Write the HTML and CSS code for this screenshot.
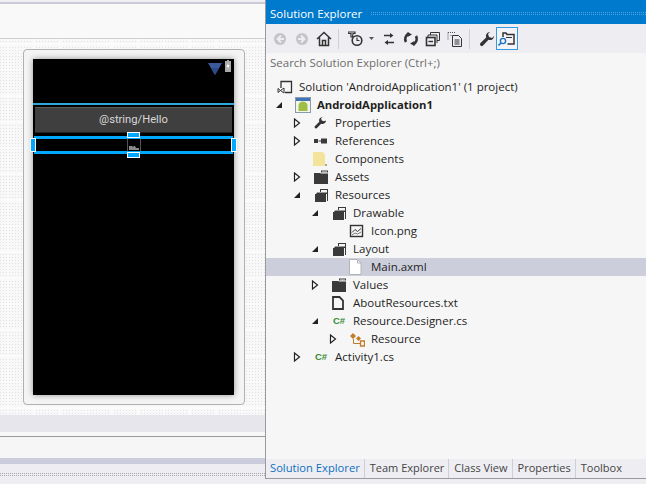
FILE: index.html
```html
<!DOCTYPE html>
<html lang="en">
<head>
<meta charset="utf-8">
<title>Solution Explorer</title>
<link rel="stylesheet" href="styles.css">
</head>
<body>
<svg class="defs" width="0" height="0">
  <defs>
    <symbol id="folder" viewBox="0 0 16 16"><path d="M1 4h6l1 .5h7V15H1z" fill="#3a3a3a"/><path d="M8 1.500h7v2H8z" fill="#3a3a3a"/><path d="M9 2.500h5v1H9z" fill="#f6f6f6"/></symbol>
    <symbol id="folder-open" viewBox="0 0 16 16"><path d="M2 7h11v8H2z" fill="#3a3a3a"/><path d="M7 2h8v12h-1V3H8v2H7z" fill="#3a3a3a"/><path d="M8 3h6v3H8z" fill="#f6f6f6"/><path d="M4 5.500h10V7H3z" fill="#3a3a3a"/></symbol>
    <symbol id="open" viewBox="0 0 8 8"><path d="M7 1v6H1z" fill="#222"/></symbol>
    <symbol id="closed" viewBox="0 0 8 10"><path d="M1.500 1l5 4-5 4z" fill="#fff" stroke="#222" stroke-width="1.200"/></symbol>
  </defs>
</svg>
<main class="left">
  <div class="top-strip"></div>
  <div class="doc-head"></div>
  <section class="canvas">
    <div class="device">
      <div class="screen">
        <div class="status">
          <svg class="wifi" width="14" height="13" viewBox="0 0 14 13"><path d="M0 1h14L7 13z" fill="#3c5a9a"/><path d="M3 6h8l-4 7z" fill="#2a4a8a"/></svg>
          <svg class="battery" width="6" height="12" viewBox="0 0 6 12"><path d="M2 0h2v1h2v11H0V1h2z" fill="#aaa"/><path d="M3.500 2L1.500 7h1.500l-.5 3 2-5H3z" fill="#fff"/></svg>
        </div>
        <div class="titlebar"></div>
        <div class="button">@string/Hello</div>
        <div class="selected">
          <div class="thumb">
            <svg width="12" height="11" viewBox="0 0 12 11"><path d="M1 11V7h3l1 1 1-1h1l1 2h3v2z" fill="#8a8a8a"/></svg>
          </div>
          <span class="handle h-left"></span>
          <span class="handle h-right"></span>
          <span class="handle h-top"></span>
          <span class="handle h-bottom"></span>
        </div>
      </div>
    </div>
  </section>
  <div class="scroll-track"></div>
  <div class="bottom-a"></div>
  <div class="bottom-tab"></div>
  <div class="bottom-grip"></div>
</main>
<aside class="panel">
  <header class="panel-title"><span class="panel-name">Solution Explorer</span><span class="grip"></span></header>
  <nav class="toolbar">
    <svg class="tool" width="16" height="16" viewBox="0 0 16 16"><circle cx="8" cy="8" r="6" fill="#c4c4c8"/><path d="M9 4.500L5.500 8 9 11.500M5.500 8H12" fill="none" stroke="#eeeef2" stroke-width="2"/></svg>
    <svg class="tool" width="16" height="16" viewBox="0 0 16 16"><circle cx="8" cy="8" r="6" fill="#c4c4c8"/><path d="M7 4.500L10.500 8 7 11.500M10.500 8H4" fill="none" stroke="#eeeef2" stroke-width="2"/></svg>
    <svg class="tool-last" width="16" height="16" viewBox="0 0 16 16"><path d="M1 8l7-6.500L15 8M3.500 6.500V14.500H12.500V6.500" fill="none" stroke="#333" stroke-width="1.500"/><path d="M6.500 14.500V9.500h3v5" fill="none" stroke="#333" stroke-width="1.500"/></svg>
    <span class="sep"></span>
    <svg class="tool" width="16" height="16" viewBox="0 0 16 16"><circle cx="9" cy="9.500" r="4.800" fill="none" stroke="#333" stroke-width="1.600"/><path d="M9 6.500v3h2.500M0 1h7v1.500H5L4.500 6H3V2.500H0z" fill="none" stroke="#333" stroke-width="1.200"/></svg>
    <svg class="caret" width="5" height="3" viewBox="0 0 5 3"><path d="M0 0h5L2.500 3z" fill="#555"/></svg>
    <svg class="tool" width="16" height="16" viewBox="0 0 16 16"><path d="M9 2l3.500 2.500L9 7V5.300H3V3.700h6zM7 9v1.700h6v1.600H7V14l-3.500-2.500z" fill="#333"/></svg>
    <svg class="tool" width="16" height="16" viewBox="0 0 16 16"><path d="M3 11A6 6 0 0 1 6 2.500M13 5a6 6 0 0 1-3 8.500" fill="none" stroke="#333" stroke-width="2.600"/><path d="M4.500 1v5L9 3.500zM11.500 15v-5L7 12.500z" fill="#333"/></svg>
    <svg class="tool" width="16" height="16" viewBox="0 0 16 16"><path d="M5.500 4V1.500h9v8H12M3 6.500V4h9v8" fill="none" stroke="#333"/><rect x="1.500" y="6.500" width="8.500" height="8" fill="#eeeef2" stroke="#333" stroke-width="1.600"/><path d="M3.500 10.500h4.500" stroke="#333" stroke-width="1.400"/></svg>
    <svg class="tool-last" width="16" height="16" viewBox="0 0 16 16"><path d="M1 1.500h7M1 1.500v8M4 4v2" fill="none" stroke="#555" stroke-dasharray="1 1"/><path d="M5.500 4.500h6l3 3v8h-9z" fill="#eeeef2" stroke="#333"/><path d="M7.500 9h5M7.500 11h5M7.500 13h5" stroke="#333"/></svg>
    <span class="sep"></span>
    <svg class="tool-last" width="16" height="16" viewBox="0 0 16 16"><path d="M15 5a4 4 0 0 1-5.500 3.800L4 14.500a1.500 1.500 0 0 1-2.500-2.500L7.200 6.500A4 4 0 0 1 11 1l-2 2 1 3 3 1 2-2z" fill="#333"/></svg>
    <span class="tool-on"><svg width="18" height="16" viewBox="0 0 18 16"><path d="M5 6V2h3l1 1.500h7V13H9.500" fill="none" stroke="#333" stroke-width="1.500"/><path d="M8 6h6v1H8z" fill="#333"/><circle cx="5" cy="10" r="2.600" fill="none" stroke="#1b6fc4" stroke-width="1.400"/><path d="M3 12l-2.500 2.500" stroke="#1b6fc4" stroke-width="1.600"/></svg></span>
  </nav>
  <div class="search">Search Solution Explorer (Ctrl+;)</div>
  <ul class="tree">
    <li class="row l0"><svg class="ic" width="16" height="16" viewBox="0 0 16 16"><path d="M4 9V2.500h10.500v11H8" fill="none" stroke="#333" stroke-width="1.300"/><path d="M1 9.500l2.500 2-2.500 2zM3.500 11.500L7 9v5z" fill="none" stroke="#333"/></svg><span class="label">Solution 'AndroidApplication1' (1 project)</span></li>
    <li class="row l1"><svg class="arrow" width="8" height="8"><use href="#open"/></svg><svg class="ic" width="16" height="16" viewBox="0 0 16 16"><rect x=".5" y=".5" width="15" height="15" fill="#f4f4ea" stroke="#8a9aa8"/><rect x="1" y="1" width="14" height="3" fill="#3f74b6"/><path d="M3.500 14V8.500a4.500 4 0 0 1 9 0V14z" fill="#9dbf45"/></svg><span class="label bold">AndroidApplication1</span></li>
    <li class="row l2"><svg class="arrow" width="8" height="10"><use href="#closed"/></svg><svg class="ic" width="16" height="16" viewBox="0 0 16 16"><path d="M13 5.500a3.500 3.500 0 0 1-4.800 3.200L4 13a1.300 1.300 0 0 1-2-2L6.300 6.800A3.500 3.500 0 0 1 9.500 2L8 3.500l.8 2 2 .8z" fill="#333"/></svg><span class="label">Properties</span></li>
    <li class="row l2"><svg class="arrow" width="8" height="10"><use href="#closed"/></svg><svg class="ic" width="16" height="16" viewBox="0 0 16 16"><path d="M1 6h4v4H1zM8 5.500h6v5H8zM5.500 7.500H8v1H5.500z" fill="#3a3a3a"/></svg><span class="label">References</span></li>
    <li class="row l2"><span class="arrow"></span><svg class="ic" width="16" height="16" viewBox="0 0 16 16"><path d="M0 1h10l2 3v11H0z" fill="#f4e39a"/><path d="M12 13h2v2h-2z" fill="#a8a8a0"/></svg><span class="label">Components</span></li>
    <li class="row l2"><svg class="arrow" width="8" height="10"><use href="#closed"/></svg><svg class="ic" width="16" height="16"><use href="#folder"/></svg><span class="label">Assets</span></li>
    <li class="row l2"><svg class="arrow" width="8" height="8"><use href="#open"/></svg><svg class="ic" width="16" height="16"><use href="#folder-open"/></svg><span class="label">Resources</span></li>
    <li class="row l3"><svg class="arrow" width="8" height="8"><use href="#open"/></svg><svg class="ic" width="16" height="16"><use href="#folder-open"/></svg><span class="label">Drawable</span></li>
    <li class="row l4"><span class="arrow"></span><svg class="ic" width="16" height="16" viewBox="0 0 16 16"><rect x="1.500" y="2.500" width="12" height="11" fill="#f6f6f6" stroke="#333" stroke-width="1.400"/><path d="M3 9.500l3-3 2.500 2 3.500-3" fill="none" stroke="#333"/><path d="M3 12l3-2 2.500 1 3.500-2" fill="none" stroke="#777"/></svg><span class="label">Icon.png</span></li>
    <li class="row l3"><svg class="arrow" width="8" height="8"><use href="#open"/></svg><svg class="ic" width="16" height="16"><use href="#folder-open"/></svg><span class="label">Layout</span></li>
    <li class="row l4 current"><span class="arrow"></span><svg class="ic" width="16" height="16" viewBox="0 0 16 16"><path d="M.5 .5h8l3.500 3.500v11.500H.5z" fill="#fff" stroke="#b4b4b8"/><path d="M8.500 .5V4H12" fill="none" stroke="#b4b4b8"/></svg><span class="label">Main.axml</span></li>
    <li class="row l3"><svg class="arrow" width="8" height="10"><use href="#closed"/></svg><svg class="ic" width="16" height="16"><use href="#folder"/></svg><span class="label">Values</span></li>
    <li class="row l3"><span class="arrow"></span><svg class="ic" width="16" height="16" viewBox="0 0 16 16"><path d="M2 2h6.500L12 5.500V14H2z" fill="#f6f6f6" stroke="#333" stroke-width="1.800"/></svg><span class="label">AboutResources.txt</span></li>
    <li class="row l3"><svg class="arrow" width="8" height="8"><use href="#open"/></svg><span class="ic csharp">C#</span><span class="label">Resource.Designer.cs</span></li>
    <li class="row l4"><svg class="arrow" width="8" height="10"><use href="#closed"/></svg><svg class="ic" width="16" height="16" viewBox="0 0 16 16"><path d="M1 5l3-3 3 3-3 3zM7 7.500l2.500-2.500 2.500 2.500L9.500 10z" fill="#c17d2a"/><path d="M11.500 10v5h4v-5z" fill="none" stroke="#c17d2a" stroke-width="1.300"/><path d="M4.500 8v4.500h7" fill="none" stroke="#c17d2a"/></svg><span class="label">Resource</span></li>
    <li class="row l2"><svg class="arrow" width="8" height="10"><use href="#closed"/></svg><span class="ic csharp">C#</span><span class="label">Activity1.cs</span></li>
  </ul>
  <footer class="tabs">
    <span class="tab active">Solution Explorer</span>
    <span class="tab">Team Explorer</span>
    <span class="tab">Class View</span>
    <span class="tab">Properties</span>
    <span class="tab">Toolbox</span>
  </footer>
</aside>
</body>
</html>
```

FILE: styles.css
```css
* { box-sizing: border-box; }
html, body { margin: 0; padding: 0; }
body {
  width: 646px;
  height: 484px;
  overflow: hidden;
  display: flex;
  align-items: flex-start;
  background: #eeeef2;
  font-family: "Open Sans", "Liberation Sans", sans-serif;
  font-size: 11.5px;
  color: #1e1e1e;
}
.defs { position: absolute; }

.left { width: 265px; height: 484px; display: flex; flex-direction: column; flex: none; }
.top-strip { height: 5px; background: linear-gradient(#f0f0f4 0 2px, #cacad6 2px 4px, #fafafa 4px); }
.doc-head { height: 34px; background: #f9f9f9; border-bottom: 1px solid #cfcfd4; }
.canvas {
  height: 376px;
  padding: 10px 0 0 23px;
  background-color: #f8f8f8;
  background-image:
    linear-gradient(90deg, #fbfbfb 2px, transparent 2px),
    linear-gradient(#fbfbfb 2px, transparent 2px),
    linear-gradient(#f8f8f8 2px, transparent 2px),
    linear-gradient(90deg, #e2e2e4 1px, #f8f8f8 1px);
  background-size: 26px 26px, 26px 26px, 3px 3px, 3px 3px;
  background-position: 7px 0, 0 4px, 0 0, 0 0;
}
.device {
  width: 222px;
  height: 356px;
  padding: 9px 0 0 9px;
  border: 1px solid #b0b0b4;
  border-radius: 4px;
  background: #f4f4f4;
}
.screen {
  position: relative;
  width: 201px;
  height: 336px;
  background: #000;
  box-shadow: 0 0 6px rgba(0, 0, 0, .4);
}
.status { height: 16px; display: flex; justify-content: flex-end; align-items: flex-start; gap: 3px; padding: 1px 3px 0 0; }
.wifi { margin-top: 2px; }
.titlebar { height: 30px; border-bottom: 2px solid #2ea6d8; }
.button {
  margin: 2px 2px 0;
  height: 26px;
  background: #3f3f3f;
  border-top: 1px solid #5a5a5a;
  border-bottom: 1px solid #222;
  color: #d8d8d8;
  font-family: Roboto, sans-serif;
  font-size: 11.2px;
  line-height: 24px;
  text-align: center;
}
.selected {
  position: relative;
  margin: 3px 1px 0;
  width: 199px;
  height: 18px;
  border: solid #00a8ff;
  border-width: 3px 2px;
  display: flex;
  justify-content: center;
}
.thumb {
  width: 14px;
  height: 12px;
  border: 1px solid #555;
  border-width: 0 1px;
  display: flex;
  justify-content: center;
}
.handle { position: absolute; background: #00a8ff; border: 1px solid #fff; }
.h-left { left: -6px; top: -1px; width: 6px; height: 14px; }
.h-right { right: -6px; top: -1px; width: 6px; height: 14px; }
.h-top { left: 91px; top: -7px; width: 13px; height: 6px; }
.h-bottom { left: 91px; top: 13px; width: 13px; height: 6px; }

.scroll-track { height: 17px; background: #e6e6ec; }
.bottom-a { height: 5px; background: #f8f8f8; border-bottom: 1px solid #9a9a9e; }
.bottom-tab { height: 27px; background: #f6f6f6; border-bottom: 6px solid #cbcddc; }
.bottom-grip {
  flex: none;
  margin-top: 8px;
  height: 4px;
  background-image:
    linear-gradient(#eeeef2 1px, transparent 1px),
    linear-gradient(90deg, #a8a8ae 1px, #eeeef2 1px);
  background-size: 2px 2px, 2px 2px;
}

.panel {
  width: 381px;
  height: 479px;
  flex: none;
  display: flex;
  flex-direction: column;
  background: #f6f6f6;
  border-left: 1px solid #9a9a9e;
  border-bottom: 1px solid #9a9a9e;
}
.panel-title {
  height: 24px;
  flex: none;
  display: flex;
  align-items: center;
  padding: 2px 0 0 4px;
  gap: 8px;
  background: #007acc;
  color: #fff;
}
.grip {
  flex: 1;
  height: 5px;
  background-image:
    linear-gradient(#007acc 1px, transparent 1px),
    linear-gradient(90deg, #007acc 1px, #4da6e4 1px);
  background-size: 2px 2px, 2px 2px;
}
.toolbar {
  height: 29px;
  flex: none;
  display: flex;
  align-items: center;
  padding-left: 6px;
  background: #eeeef2;
}
.tool { flex: none; margin-right: 6px; }
.tool-last { flex: none; }
.caret { margin: 0 7px 0 -1px; flex: none; }
.sep { width: 1px; height: 20px; background: #d0d0d6; margin: 0 9px 0 6px; flex: none; }
.tool-on {
  display: flex;
  align-items: center;
  justify-content: center;
  width: 22px;
  height: 23px;
  margin-left: 1px;
  border: 1px solid #3399e0;
  background: #f4f4f8;
}
.search {
  height: 20px;
  flex: none;
  padding-left: 4px;
  line-height: 19px;
  color: #6d6d6d;
  background: #f6f6f6;
}
.tree { list-style: none; margin: 5px 0 0; padding: 0; flex: 1; }
.row { height: 18px; display: flex; align-items: center; white-space: nowrap; }
.arrow { width: 8px; flex: none; margin: 0 8px 0 2px; }
.ic { flex: none; margin: 0 6px 0 4px; }
.label { line-height: 18px; }
.bold { font-weight: 700; font-size: 11.3px; }
.l0, .l1 { padding-left: 7px; }
.l2 { padding-left: 25px; }
.l3 { padding-left: 43px; }
.l4 { padding-left: 61px; }
.current { background: #cccedb; }
.csharp {
  width: 16px;
  color: #388a34;
  font-family: "Liberation Sans", sans-serif;
  font-weight: 700;
  font-size: 9.5px;
  line-height: 16px;
  text-align: center;
}
.tabs { height: 19px; flex: none; display: flex; background: #eeeef2; font-size: 11px; line-height: 18px; white-space: nowrap; }
.tab { padding: 0 4px 0 5px; border-right: 1px solid #cccedb; color: #444; }
.tab:last-child { border-right: 0; }
.tab.active { padding-left: 4px; color: #0e70c0; font-size: 11.2px; }
```
